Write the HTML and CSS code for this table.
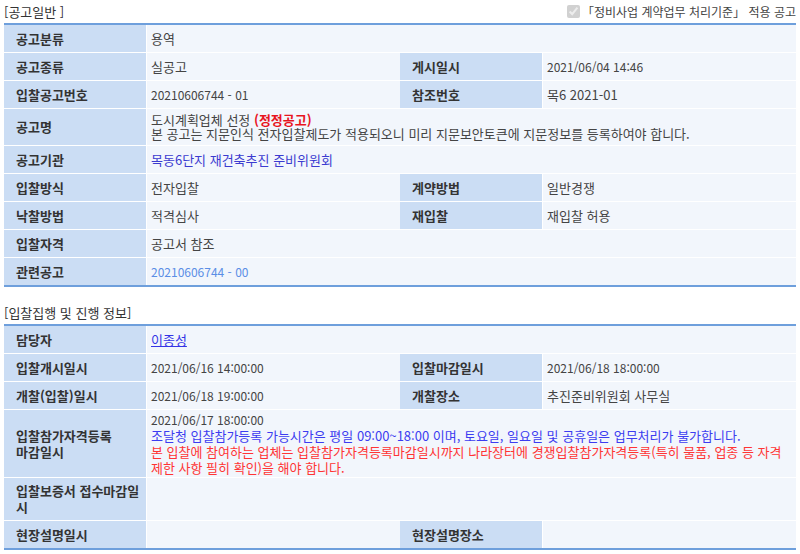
FILE: index.html
```html
<!DOCTYPE html>
<html lang="ko">
<head>
<meta charset="utf-8">
<link rel="stylesheet" href="styles.css">
</head>
<body>
<div class="page">
  <div class="sec-head">
    <h2 class="sec-title">[공고일반 ]</h2>
    <label class="std"><input type="checkbox" checked disabled><span>「정비사업 계약업무 처리기준」 적용 공고</span></label>
  </div>
  <table class="info">
    <colgroup><col class="c-l"><col class="c-v"><col class="c-l"><col class="c-v"></colgroup>
    <tr><th>공고분류</th><td colspan="3">용역</td></tr>
    <tr><th>공고종류</th><td>실공고</td><th>게시일시</th><td class="num">2021/06/04 14:46</td></tr>
    <tr><th>입찰공고번호</th><td class="num">20210606744 - 01</td><th>참조번호</th><td>목6 2021-01</td></tr>
    <tr class="r-name"><th>공고명</th><td colspan="3">도시계획업체 선정 <b class="red">(정정공고)</b><br>본 공고는 지문인식 전자입찰제도가 적용되오니 미리 지문보안토큰에 지문정보를 등록하여야 합니다.</td></tr>
    <tr><th>공고기관</th><td colspan="3"><span class="org">목동6단지 재건축추진 준비위원회</span></td></tr>
    <tr><th>입찰방식</th><td>전자입찰</td><th>계약방법</th><td>일반경쟁</td></tr>
    <tr><th>낙찰방법</th><td>적격심사</td><th>재입찰</th><td>재입찰 허용</td></tr>
    <tr><th>입찰자격</th><td colspan="3">공고서 참조</td></tr>
    <tr class="last"><th>관련공고</th><td colspan="3" class="num"><span class="rel">20210606744 - 00</span></td></tr>
  </table>

  <div class="sec-head second">
    <h2 class="sec-title">[입찰집행 및 진행 정보]</h2>
  </div>
  <table class="info">
    <colgroup><col class="c-l"><col class="c-v"><col class="c-l"><col class="c-v"></colgroup>
    <tr><th>담당자</th><td colspan="3"><a class="person" href="#">이종성</a></td></tr>
    <tr><th>입찰개시일시</th><td class="num">2021/06/16 14:00:00</td><th>입찰마감일시</th><td class="num">2021/06/18 18:00:00</td></tr>
    <tr><th>개찰(입찰)일시</th><td class="num">2021/06/18 19:00:00</td><th>개찰장소</th><td>추진준비위원회 사무실</td></tr>
    <tr class="r-reg"><th>입찰참가자격등록<br>마감일시</th><td colspan="3"><span class="num">2021/06/17 18:00:00</span><br><span class="blue">조달청 입찰참가등록 가능시간은 평일 09:00~18:00 이며, 토요일, 일요일 및 공휴일은 업무처리가 불가합니다.</span><br><span class="warn">본 입찰에 참여하는 업체는 입찰참가자격등록마감일시까지 나라장터에 경쟁입찰참가자격등록(특히 물품, 업종 등 자격제한 사항 필히 확인)을 해야 합니다.</span></td></tr>
    <tr class="r-bond"><th>입찰보증서 접수마감일시</th><td colspan="3"></td></tr>
    <tr class="last"><th>현장설명일시</th><td></td><th>현장설명장소</th><td></td></tr>
  </table>
</div>
</body>
</html>
```

FILE: styles.css
```css
* { box-sizing: border-box; }
html, body { margin: 0; padding: 0; background: #fff; }
body {
  font-family: "Noto Sans CJK KR", "Liberation Sans", sans-serif;
  font-size: 13px;
  color: #444;
}
.page { padding: 0 4px; width: 800px; }
.sec-head {
  height: 23px;
  display: flex;
  align-items: center;
  justify-content: space-between;
}
.sec-head.second { margin-top: 14px; }
.sec-title {
  margin: 0;
  font-size: 13px;
  font-weight: normal;
  color: #333;
  line-height: 16px;
}
.std {
  display: flex;
  align-items: center;
  color: #444;
  font-size: 12px;
  line-height: 14px;
}
.std input { margin: 0 2px 0 0; width: 13px; height: 13px; }
.info {
  width: 792px;
  table-layout: fixed;
  border-collapse: separate;
  border-spacing: 0;
  border-top: 2px solid #6e9fdc;
  border-bottom: 2px solid #6e9fdc;
}
.c-l { width: 143px; }
.c-v { width: 253px; }
.info th, .info td {
  height: 28px;
  line-height: 16px;
  border-bottom: 1px solid #fff;
  vertical-align: middle;
  text-align: left;
}
.info tr.last th, .info tr.last td { border-bottom: 0; height: 27px; }
.info th {
  background: #cbddf4;
  color: #333;
  font-weight: bold;
  padding: 0 4px 0 12px;
  border-right: 1px solid #fff;
}
.info td {
  background: #f2f6fc;
  padding: 0 4px 0 4px;
}
.info .num { font-size: 12px; }
.info tr.r-name th, .info tr.r-name td { height: 37px; line-height: 14px; }
.info tr.r-reg th, .info tr.r-reg td { height: 68px; line-height: 16px; }
.info tr.r-reg td { vertical-align: top; padding-top: 2px; }
.info tr.r-bond th, .info tr.r-bond td { height: 43px; }
.red { color: #e8141e; font-weight: bold; }
.org { color: #3b3bd0; }
.rel { color: #5b8ee6; }
.person { color: #3434e6; text-decoration: underline; }
.blue { color: #3c3cf0; }
.warn { color: #ff3434; }
```
